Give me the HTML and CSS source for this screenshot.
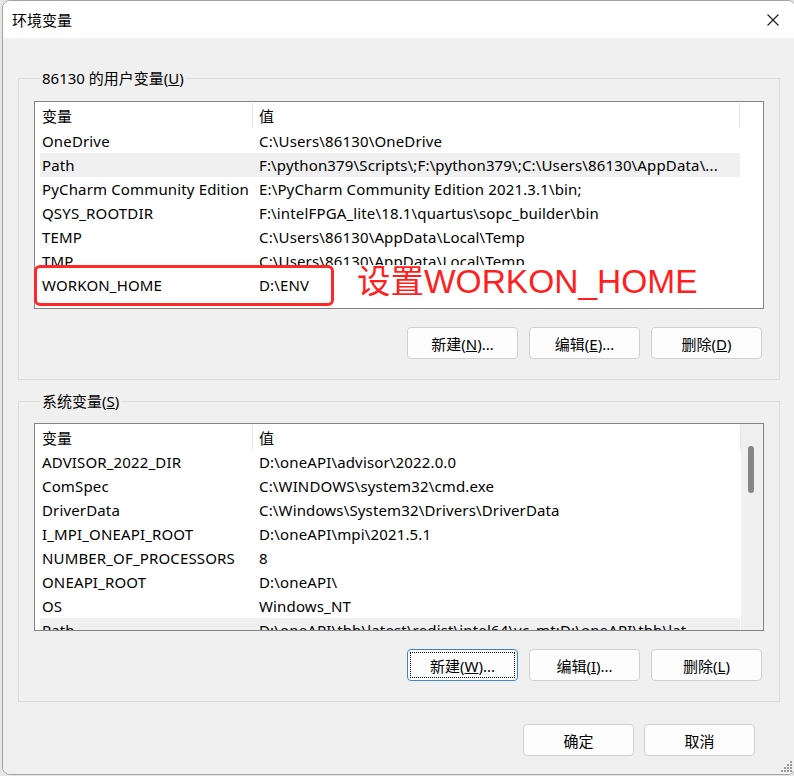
FILE: index.html
```html
<!DOCTYPE html>
<html lang="zh-CN">
<head>
<meta charset="utf-8">
<title>环境变量</title>
<link rel="stylesheet" href="styles.css">
</head>
<body>
<div class="window">
  <div class="titlebar">
    <span class="title">环境变量</span>
    <svg class="close" width="12" height="12" viewBox="0 0 12 12"><path d="M0.5 0.5L11.5 11.5M11.5 0.5L0.5 11.5" stroke="#1a1a1a" stroke-width="1.1" fill="none"/></svg>
  </div>
  <div class="content">
    <section class="group g1">
      <div class="group-title">86130 的用户变量(<u>U</u>)</div>
      <div class="lv">
        <div class="lv-main">
          <div class="lv-head"><div class="hc c1">变量</div><div class="hc c2">值</div></div>
          <div class="row"><span class="k">OneDrive</span><span class="v">C:\Users\86130\OneDrive</span></div>
          <div class="row sel"><span class="k">Path</span><span class="v">F:\python379\Scripts\;F:\python379\;C:\Users\86130\AppData\...</span></div>
          <div class="row"><span class="k">PyCharm Community Edition</span><span class="v">E:\PyCharm Community Edition 2021.3.1\bin;</span></div>
          <div class="row"><span class="k">QSYS_ROOTDIR</span><span class="v">F:\intelFPGA_lite\18.1\quartus\sopc_builder\bin</span></div>
          <div class="row"><span class="k">TEMP</span><span class="v">C:\Users\86130\AppData\Local\Temp</span></div>
          <div class="row"><span class="k">TMP</span><span class="v">C:\Users\86130\AppData\Local\Temp</span></div>
          <div class="row"><span class="k">WORKON_HOME</span><span class="v">D:\ENV</span></div>
        </div>
        <div class="annot">
          <div class="mask"></div>
          <div class="redbox"></div>
          <div class="redtext">设置WORKON_HOME</div>
        </div>
      </div>
      <div class="btns">
        <button class="btn">新建(<u>N</u>)...</button>
        <button class="btn">编辑(<u>E</u>)...</button>
        <button class="btn">删除(<u>D</u>)</button>
      </div>
    </section>

    <section class="group g2">
      <div class="group-title">系统变量(<u>S</u>)</div>
      <div class="lv">
        <div class="lv-main">
          <div class="lv-head"><div class="hc c1">变量</div><div class="hc c2 last">值</div></div>
          <div class="row"><span class="k">ADVISOR_2022_DIR</span><span class="v">D:\oneAPI\advisor\2022.0.0</span></div>
          <div class="row"><span class="k">ComSpec</span><span class="v">C:\WINDOWS\system32\cmd.exe</span></div>
          <div class="row"><span class="k">DriverData</span><span class="v">C:\Windows\System32\Drivers\DriverData</span></div>
          <div class="row"><span class="k">I_MPI_ONEAPI_ROOT</span><span class="v">D:\oneAPI\mpi\2021.5.1</span></div>
          <div class="row"><span class="k">NUMBER_OF_PROCESSORS</span><span class="v">8</span></div>
          <div class="row"><span class="k">ONEAPI_ROOT</span><span class="v">D:\oneAPI\</span></div>
          <div class="row"><span class="k">OS</span><span class="v">Windows_NT</span></div>
          <div class="row sel"><span class="k">Path</span><span class="v">D:\oneAPI\tbb\latest\redist\intel64\vc_mt;D:\oneAPI\tbb\lat...</span></div>
        </div>
        <div class="lv-scroll"><div class="thumb"></div></div>
      </div>
      <div class="btns">
        <button class="btn focus">新建(<u>W</u>)...</button>
        <button class="btn">编辑(<u>I</u>)...</button>
        <button class="btn">删除(<u>L</u>)</button>
      </div>
    </section>

    <div class="footer">
      <button class="btn">确定</button>
      <button class="btn">取消</button>
    </div>
  </div>
  <svg class="grip" width="12" height="12" viewBox="0 0 12 12">
    <g fill="#9a9a9a">
      <rect x="9" y="0" width="2" height="2"/>
      <rect x="6" y="3" width="2" height="2"/><rect x="9" y="3" width="2" height="2"/>
      <rect x="3" y="6" width="2" height="2"/><rect x="6" y="6" width="2" height="2"/><rect x="9" y="6" width="2" height="2"/>
      <rect x="0" y="9" width="2" height="2"/><rect x="3" y="9" width="2" height="2"/><rect x="6" y="9" width="2" height="2"/><rect x="9" y="9" width="2" height="2"/>
    </g>
  </svg>
</div>
</body>
</html>
```
FILE: styles.css
```css
html, body {
  margin: 0;
  padding: 0;
}
body {
  background: #e6e6e6;
  overflow: hidden;
  font-family: "Noto Sans", "Noto Sans CJK SC", sans-serif;
  font-size: 15px;
  color: #000;
}
.window {
  position: relative;
  margin-left: 2px;
  width: 794px;
  height: 775px;
  box-sizing: border-box;
  border: 1px solid #a3a3a3;
  border-radius: 8px;
  overflow: hidden;
  background: #f0f0f0;
  display: flex;
  flex-direction: column;
}
.titlebar {
  flex: none;
  height: 37px;
  background: #fff;
  display: flex;
  align-items: center;
  justify-content: space-between;
  padding: 0 16px 0 9px;
}
.title {
  font-family: "Noto Sans CJK SC", sans-serif;
  font-size: 15px;
  line-height: 20px;
}
.close {
  display: block;
}
.content {
  flex: 1;
  background: #f0f0f0;
}
.group {
  margin: 40px 15px 0;
  border: 1px solid #dcdcdc;
  padding: 0 15px 20px;
}
.g2 {
  margin-top: 21px;
}
.group-title {
  width: max-content;
  margin: -11px 0 0 6px;
  padding: 0 2px;
  line-height: 20px;
  background: #f0f0f0;
}
.lv {
  position: relative;
  margin-top: 13px;
  height: 208px;
  box-sizing: border-box;
  border: 1px solid #838383;
  background: #fff;
  display: flex;
}
.g2 .lv {
  margin-top: 12px;
}
.lv-main {
  flex: 1;
  min-width: 0;
  overflow: hidden;
}
.lv-head {
  display: flex;
  height: 27px;
}
.g2 .lv-head {
  height: 26px;
}
.hc {
  box-sizing: border-box;
  margin-top: 1px;
  height: 25px;
  line-height: 25px;
  border-right: 1px solid #e5e5e5;
  font-family: "Noto Sans CJK SC", sans-serif;
}
.c1 {
  width: 218px;
  padding-left: 7px;
}
.c2 {
  width: 487px;
  padding-left: 6px;
}
.g2 .c2 {
  width: 488px;
}
.row {
  display: flex;
  margin-left: 5px;
  width: 700px;
  height: 24px;
  line-height: 24px;
  white-space: nowrap;
  letter-spacing: 0.15px;
}
.row.sel {
  background: #f0f0f0;
}
.k {
  flex: none;
  width: 219px;
  box-sizing: border-box;
  padding-left: 2px;
  overflow: hidden;
}
.v {
  flex: 1;
  min-width: 0;
  overflow: hidden;
}
.lv-scroll {
  flex: none;
  width: 22px;
  box-sizing: border-box;
  background: #f0f0f0;
  padding: 22px 0 0 7px;
}
.thumb {
  width: 6px;
  height: 47px;
  border-radius: 3px;
  background: #868686;
}
.annot {
  position: absolute;
  left: -1px;
  top: 163px;
}
.mask {
  position: absolute;
  left: 1px;
  top: 0;
  width: 700px;
  height: 8px;
  background: #fff;
}
.redbox {
  position: absolute;
  left: 0;
  top: 0;
  width: 300px;
  height: 41px;
  box-sizing: border-box;
  border: 3px solid #ff2727;
  border-radius: 6px;
}
.redtext {
  position: absolute;
  left: 323px;
  top: -3px;
  white-space: nowrap;
  font-family: "Liberation Sans", "Noto Sans CJK SC", sans-serif;
  font-size: 33.5px;
  line-height: 40px;
  color: #ff1f1f;
}
.btns {
  display: flex;
  justify-content: flex-end;
  gap: 11px;
  margin-top: 18px;
  padding-right: 2px;
}
.btn {
  position: relative;
  width: 111px;
  height: 32px;
  box-sizing: border-box;
  border: 1px solid #d0d0d0;
  border-radius: 4px;
  background: #fdfdfd;
  padding: 0;
  font-family: "Noto Sans", "Noto Sans CJK SC", sans-serif;
  font-size: 15px;
  color: #000;
}
.btn.focus {
  border-color: #3b86cf;
}
.btn.focus::after {
  content: "";
  position: absolute;
  left: 2px;
  top: 2px;
  right: 2px;
  bottom: 2px;
  border: 1px dotted #000;
}
.footer {
  display: flex;
  justify-content: flex-end;
  gap: 10px;
  margin: 22px 40px 0 0;
}
.grip {
  position: absolute;
  right: 2px;
  bottom: 1px;
}
```
